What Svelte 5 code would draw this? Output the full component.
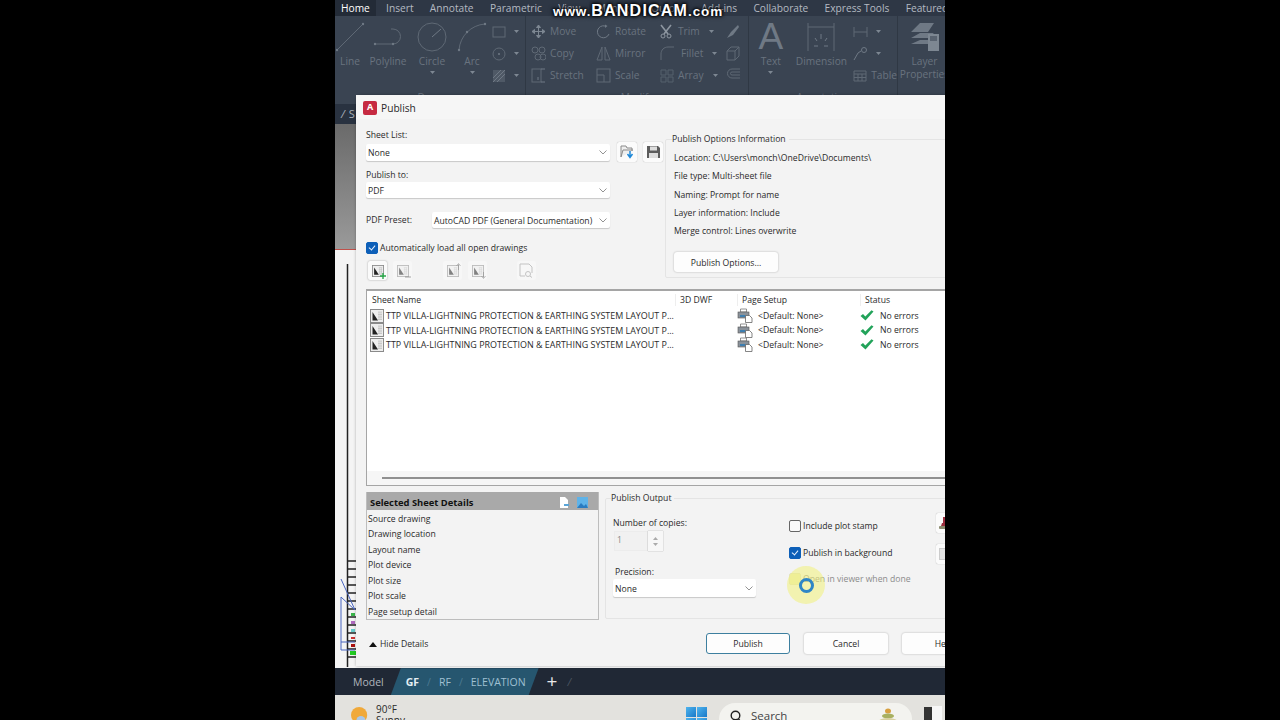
<script>
  const tabs = ['Home', 'Insert', 'Annotate', 'Parametric', 'View', 'Manage', 'Output', 'Add-ins', 'Collaborate', 'Express Tools', 'Featured Apps'];
  const info = [
    ['Location:', 'C:\\Users\\monch\\OneDrive\\Documents\\'],
    ['File type:', 'Multi-sheet file'],
    ['Naming:', 'Prompt for name'],
    ['Layer information:', 'Include'],
    ['Merge control:', 'Lines overwrite']
  ];
  const details = ['Source drawing', 'Drawing location', 'Layout name', 'Plot device', 'Plot size', 'Plot scale', 'Page setup detail'];
  const sheets = [1, 2, 3];
</script>

{#snippet caret()}
  <svg class="caret" width="5" height="3" viewBox="0 0 5 3"><path d="M0 0h5L2.500 3z" fill="#7d8792"/></svg>
{/snippet}

{#snippet chevron()}
  <svg class="chev" width="8" height="5" viewBox="0 0 8 5"><path d="M.5.5 4 4 7.500.5" fill="none" stroke="#777" stroke-width=".8"/></svg>
{/snippet}

{#snippet sheetIcon(size)}
  <svg width={size} height={size} viewBox="0 0 14 14">
    <rect x=".5" y=".5" width="13" height="13" fill="#eee" stroke="#8a8a8a"/>
    <path d="M8 3h4M8 5.500h4M8 8h4M8 10.500h4M9 3v8M11 3v8" stroke="#bbb" stroke-width=".6" fill="none"/>
    <path d="M2.500 3v8.500H8z" fill="#222"/>
  </svg>
{/snippet}

{#snippet setupIcon()}
  <svg width="16" height="15" viewBox="0 0 16 15">
    <path d="M3.500 1h6v3h-6z" fill="#fff" stroke="#777" stroke-width=".8"/>
    <rect x="1" y="4" width="11" height="6" fill="#8a929a" stroke="#555" stroke-width=".6"/>
    <rect x="3" y="7" width="6" height="2" fill="#3f7fb0"/>
    <path d="M8.500 7.500h4l2.500 2.500v4.500H8.500z" fill="#fff" stroke="#666" stroke-width=".8"/>
  </svg>
{/snippet}

{#snippet tick()}
  <svg width="14" height="11" viewBox="0 0 14 11"><path d="M.5 6 3 4l2.300 2.400L11.500.3 13.500 1.500 5.500 10.500z" fill="#22a35a"/></svg>
{/snippet}

<div class="page">
  <div class="frame">
    <nav class="tabs">
      {#each tabs as tab, i}
        <span class="tab" class:active={i === 0}>{tab}</span>
      {/each}
    </nav>

    <div class="ribbon">
      <section class="panel draw">
        <div class="tool w-line">
          <svg width="30" height="30" viewBox="0 0 30 30"><path d="M2 28 28 2" stroke="#5f6975" fill="none"/><circle cx="2" cy="28" r="1.200" fill="#6f7985"/><circle cx="28" cy="2" r="1.200" fill="#6f7985"/></svg>
          <span>Line</span>
        </div>
        <div class="tool w-poly">
          <svg width="30" height="30" viewBox="0 0 30 30"><path d="M2 22H20A7.500 7.500 0 0 0 20 7H18" stroke="#5f6975" fill="none"/><circle cx="2" cy="22" r="1.200" fill="#6f7985"/><circle cx="20" cy="22" r="1.200" fill="#6f7985"/></svg>
          <span>Polyline</span>
        </div>
        <div class="tool w-circle">
          <svg width="30" height="30" viewBox="0 0 30 30"><circle cx="15" cy="15" r="14" stroke="#5f6975" fill="none"/><path d="M15 15 24 7" stroke="#6f7985"/></svg>
          <span>Circle</span>
          {@render caret()}
        </div>
        <div class="tool w-arc">
          <svg width="30" height="30" viewBox="0 0 30 30"><path d="M2 28C3 14 14 3 28 2" stroke="#5f6975" fill="none"/><circle cx="2" cy="28" r="1.200" fill="#6f7985"/><circle cx="10" cy="10" r="1.200" fill="#6f7985"/><circle cx="28" cy="2" r="1.200" fill="#6f7985"/></svg>
          <span>Arc</span>
          {@render caret()}
        </div>
        <div class="stack draw-stack">
          <div class="small">
            <svg width="14" height="12" viewBox="0 0 14 12"><rect x="1" y="1" width="12" height="10" stroke="#5f6975" fill="none"/></svg>
            {@render caret()}
          </div>
          <div class="small">
            <svg width="14" height="14" viewBox="0 0 14 14"><circle cx="7" cy="7" r="6" stroke="#5f6975" fill="none"/><circle cx="7" cy="7" r="1" fill="#6f7985"/></svg>
            {@render caret()}
          </div>
          <div class="small">
            <svg width="14" height="14" viewBox="0 0 14 14"><rect x="1" y="1" width="12" height="12" fill="#4f5966"/><path d="M1 9 9 1M1 13 13 1M5 13l8-8" stroke="#6f7985"/></svg>
            {@render caret()}
          </div>
        </div>
        <span class="panel-name">Draw</span>
      </section>

      <section class="panel modify">
        <div class="mod-grid">
          <div class="small"><svg width="15" height="15" viewBox="0 0 15 15"><path d="M7.500 1v13M1 7.500h13M7.500 1 5.500 3.500h4zM7.500 14l-2-2.500h4zM1 7.500 3.500 5.500v4zM14 7.500l-2.500-2v4z" stroke="#7d8792" fill="#7d8792"/></svg><span>Move</span></div>
          <div class="small"><svg width="15" height="15" viewBox="0 0 15 15"><path d="M9 2A6 6 0 1 0 13 10" stroke="#6f7985" fill="none"/><path d="M9 .5V4l2.500-2z" fill="#6f7985"/></svg><span>Rotate</span></div>
          <div class="small trim"><svg width="12" height="15" viewBox="0 0 12 15"><path d="M1 1 8 10M11 1 4 10" stroke="#8d96a0" stroke-width="1.600"/><circle cx="3" cy="12" r="2" stroke="#8d96a0" fill="none"/><circle cx="9" cy="12" r="2" stroke="#8d96a0" fill="none"/></svg><span>Trim</span>{@render caret()}</div>
          <div class="small"><svg width="15" height="15" viewBox="0 0 15 15"><circle cx="4" cy="4" r="3" stroke="#5f6975" fill="none"/><circle cx="11" cy="4" r="3" stroke="#5f6975" fill="none"/><circle cx="7" cy="11" r="3" stroke="#5f6975" fill="none"/><circle cx="12" cy="11" r="3" stroke="#5f6975" fill="none"/></svg><span>Copy</span></div>
          <div class="small"><svg width="15" height="15" viewBox="0 0 15 15"><path d="M6 1 1 14h5zM9 1l5 13H9z" stroke="#5f6975" fill="none"/></svg><span>Mirror</span></div>
          <div class="small fillet"><svg width="15" height="15" viewBox="0 0 15 15"><path d="M1 14V8C1 4 4 1 8 1h6" stroke="#5f6975" fill="none"/></svg><span>Fillet</span>{@render caret()}</div>
          <div class="small"><svg width="15" height="15" viewBox="0 0 15 15"><rect x="1" y="1" width="9" height="13" stroke="#5f6975" fill="none"/><path d="M10 1h4M10 14h4M7 9v3" stroke="#6f7985"/></svg><span>Stretch</span></div>
          <div class="small"><svg width="15" height="15" viewBox="0 0 15 15"><rect x="1" y="1" width="13" height="13" stroke="#5f6975" fill="none"/><path d="M1 7h7v7" stroke="#5f6975" fill="none"/></svg><span>Scale</span></div>
          <div class="small"><svg width="14" height="14" viewBox="0 0 14 14"><path d="M1 1h5v5H1zM8 1h5v5H8zM1 8h5v5H1zM8 8h5v5H8z" stroke="#55606c" fill="none"/></svg><span>Array</span>{@render caret()}</div>
        </div>
        <div class="stack mod-extra">
          <svg width="14" height="15" viewBox="0 0 14 15"><path d="M1 14 5 8l7-7 1 2-6 8z" fill="#6f7985"/></svg>
          <svg width="14" height="15" viewBox="0 0 14 15"><path d="M1 5 5 1h8v9l-4 4H1zM1 5h8v9M9 5l4-4" stroke="#5f6975" fill="none"/></svg>
          <svg width="15" height="12" viewBox="0 0 15 12"><path d="M14 1H6a4.500 4.500 0 0 0 0 9h8M14 4H6a1.500 1.500 0 0 0 0 3h8" stroke="#5f6975" fill="none"/></svg>
        </div>
        <span class="panel-name">Modify</span>
      </section>

      <section class="panel annotate">
        <div class="tool w-text">
          <b class="big-a">A</b>
          <span>Text</span>
          {@render caret()}
        </div>
        <div class="tool w-dim">
          <svg width="28" height="30" viewBox="0 0 28 30"><path d="M1 1v28M27 1v28M1 5h26" stroke="#5f6975" fill="none"/><path d="M14 12v5M8 16l2 3M20 16l-2 3M7 24h4M17 24h4" stroke="#6f7985" fill="none"/></svg>
          <span>Dimension</span>
        </div>
        <div class="stack anno-stack">
          <div class="small"><svg width="15" height="12" viewBox="0 0 15 12"><path d="M1 1v10M14 1v10M1 6h13" stroke="#5f6975" fill="none"/></svg>{@render caret()}</div>
          <div class="small"><svg width="15" height="14" viewBox="0 0 15 14"><path d="M1 13 5 6l3-2" stroke="#6f7985" fill="none"/><circle cx="11" cy="3" r="2.500" stroke="#6f7985" fill="none"/></svg>{@render caret()}</div>
          <div class="small"><svg width="14" height="12" viewBox="0 0 14 12"><path d="M1 1h12v10H1zM1 4h12M1 7.500h12M5 4v7M9 4v7" stroke="#5f6975" fill="none"/></svg><span>Table</span></div>
        </div>
        <span class="panel-name">Annotation</span>
      </section>

      <section class="panel layers">
        <div class="tool w-layer">
          <svg width="30" height="30" viewBox="0 0 30 30"><path d="M1 10 10 1h14l-6 9zM1 16l9-5h14l-6 5zM1 22l9-4h8v4z" fill="#6f7985"/><rect x="18" y="12" width="11" height="17" fill="#7d8792"/><rect x="20" y="14" width="7" height="5" fill="#596370"/></svg>
          <span>Layer</span>
          <span>Properties</span>
        </div>
      </section>
    </div>

    <div class="filetabs"><i>/</i><span>S</span></div>

    <div class="canvas">
      <div class="canvas-top"></div>
      <div class="canvas-sheet">
        <svg class="drawing" width="21" height="418" viewBox="0 0 21 418">
          <path d="M12.500 14V417" stroke="#222" stroke-width="1.500" fill="none"/>
          <path d="M13 311h8M13 319h8M13 327h8M13 335h8M13 343h8M13 351h8M13 359h8M13 367h8M13 375h8M13 383h8M13 391h8M13 399h8M13 407h8" stroke="#222" stroke-width="1.300"/>
          <path d="M6 329 20 360 6 347V400H20" stroke="#4a66c0" fill="none"/>
          <path d="M6 392H20" stroke="#4a66c0"/>
          <path d="M16 363h4v3h-4z" fill="#3ab54a"/>
          <path d="M16 371h4v3h-4z" fill="#b06ac0"/>
          <path d="M16 379h4v3h-4z" fill="#6cc"/>
          <path d="M16 387h4v2h-4z" fill="#c33"/>
          <path d="M16 394h4v3h-4z" fill="#a11"/>
          <path d="M15 401h6v4h-6z" fill="#2c2"/>
        </svg>
      </div>

      <div class="dialog">
        <header class="dialog-title">
          <span class="app-icon">A</span>
          <span>Publish</span>
        </header>

        <div class="top">
          <div class="top-left">
            <div class="lbl first">Sheet List:</div>
            <div class="combo-row">
              <div class="combo wide"><span>None</span>{@render chevron()}</div>
              <button class="icon-btn" aria-label="Load sheet list">
                <svg width="15" height="14" viewBox="0 0 15 14"><path d="M1 12V1h5l1 2h5v3" stroke="#8a8a8a" fill="#eee"/><path d="M1 12 3 5h10" stroke="#8a8a8a" fill="none"/><path d="M10 6v5M7.500 9l2.500 3.500L12.500 9" stroke="#1e88d8" stroke-width="1.500" fill="none"/></svg>
              </button>
              <button class="icon-btn" aria-label="Save sheet list">
                <svg width="15" height="14" viewBox="0 0 15 14"><path d="M1 1h11l2 2v10H1z" fill="#5c5c5c"/><rect x="4" y="1.500" width="7" height="4" fill="#ddd"/><rect x="3" y="8" width="9" height="5" fill="#ddd"/></svg>
              </button>
            </div>
            <div class="lbl pub">Publish to:</div>
            <div class="combo wide pdf"><span>PDF</span>{@render chevron()}</div>
            <div class="preset">
              <span class="preset-lbl">PDF Preset:</span>
              <div class="combo"><span>AutoCAD PDF (General Documentation)</span>{@render chevron()}</div>
            </div>
            <label class="check auto"><span class="box on"></span>Automatically load all open drawings</label>
            <div class="tools">
              <button class="tool-btn raised" aria-label="Add sheets">
                {@render sheetIcon(12)}
                <svg class="sign" width="6" height="6" viewBox="0 0 6 6"><path d="M3 0v6M0 3h6" stroke="#2aa84a" stroke-width="1.400"/></svg>
              </button>
              <button class="tool-btn dim" aria-label="Remove sheets">
                {@render sheetIcon(12)}
                <svg class="sign" width="6" height="6" viewBox="0 0 6 6"><path d="M0 4h6" stroke="#777" stroke-width="1.200"/></svg>
              </button>
              <button class="tool-btn dim gap-a" aria-label="Move up">
                {@render sheetIcon(12)}
                <svg class="sign up" width="5" height="7" viewBox="0 0 5 7"><path d="M2.500 7V1M.5 3l2-2.500 2 2.500" stroke="#888" fill="none"/></svg>
              </button>
              <button class="tool-btn dim" aria-label="Move down">
                {@render sheetIcon(12)}
                <svg class="sign" width="5" height="7" viewBox="0 0 5 7"><path d="M2.500 0v6M.5 4l2 2.500 2-2.500" stroke="#888" fill="none"/></svg>
              </button>
              <button class="tool-btn dim gap-b" aria-label="Preview">
                <svg width="15" height="15" viewBox="0 0 15 15"><path d="M1 1h9l3 3v6M1 1v12h5" stroke="#999" fill="none"/><circle cx="9" cy="11" r="2.500" stroke="#999" fill="none"/><path d="M11 13l2 1.500" stroke="#999"/></svg>
              </button>
            </div>
          </div>

          <fieldset class="group options">
            <legend>Publish Options Information</legend>
            {#each info as [key, value]}
              <div class="info-line">{key} {value}</div>
            {/each}
            <button class="btn opts">Publish Options...</button>
          </fieldset>
        </div>

        <div class="list">
          <div class="list-grid list-head">
            <span class="c1">Sheet Name</span>
            <span class="c2">3D DWF</span>
            <span class="c3">Page Setup</span>
            <span class="c4">Status</span>
          </div>
          {#each sheets as s (s)}
            <div class="list-grid list-row">
              <span class="c1 name">{@render sheetIcon(14)}<span>TTP VILLA-LIGHTNING PROTECTION &amp; EARTHING SYSTEM LAYOUT P...</span></span>
              <span class="c2"></span>
              <span class="c3 setup">{@render setupIcon()}<span>&lt;Default: None&gt;</span></span>
              <span class="c4 status">{@render tick()}<span>No errors</span></span>
            </div>
          {/each}
          <div class="list-fill"></div>
          <div class="hscroll"><div class="thumb"></div></div>
        </div>

        <div class="bottom">
          <div class="details">
            <div class="details-head">
              <b>Selected Sheet Details</b>
              <svg width="10" height="11" viewBox="0 0 10 11"><path d="M1 0h5l3 3v8H1z" fill="#fff"/><path d="M5 7h5v2H5z" fill="#5aa5d8"/></svg>
              <svg width="11" height="11" viewBox="0 0 11 11"><rect width="11" height="11" fill="#5fb3e8"/><path d="M0 11 4 6l3 3 2-2 2 4z" fill="#2b7cc0"/></svg>
            </div>
            {#each details as d}
              <div class="detail">{d}</div>
            {/each}
          </div>

          <fieldset class="group output">
            <legend>Publish Output</legend>
            <div class="out-cols">
              <div class="out-left">
                <div class="lbl">Number of copies:</div>
                <div class="spinner">
                  <span class="spin-val">1</span>
                  <span class="spin-btns">
                    <svg width="5" height="3" viewBox="0 0 5 3"><path d="M0 3h5L2.500 0z" fill="#aaa"/></svg>
                    <svg width="5" height="3" viewBox="0 0 5 3"><path d="M0 0h5L2.500 3z" fill="#aaa"/></svg>
                  </span>
                </div>
                <div class="lbl prec">Precision:</div>
                <div class="combo"><span>None</span>{@render chevron()}</div>
              </div>
              <div class="out-mid">
                <label class="check"><span class="box"></span>Include plot stamp</label>
                <label class="check"><span class="box on"></span>Publish in background</label>
                <label class="check off"><span class="box"></span>Open in viewer when done</label>
              </div>
              <div class="out-right">
                <button class="icon-btn stamp" aria-label="Plot stamp settings">
                  <svg width="15" height="15" viewBox="0 0 15 15"><path d="M6 1h4v6H9l1 3H4l1-3h1z" fill="#9c2f3f"/><rect x="2" y="10" width="11" height="3" rx="1" fill="#8c8c70"/></svg>
                </button>
                <button class="icon-btn stamp" aria-label="Background settings"><span class="grey-box"></span></button>
              </div>
            </div>
          </fieldset>
        </div>

        <div class="footer">
          <button class="hide"><span class="tri"></span>Hide Details</button>
          <div class="actions">
            <button class="btn main">Publish</button>
            <button class="btn">Cancel</button>
            <button class="btn">Help</button>
          </div>
        </div>

        <div class="cursor"><span class="ring"></span></div>
      </div>
    </div>

    <div class="layout-bar">
      <span class="lay model">Model</span>
      <div class="lay-active">
        <b>GF</b><i>/</i><span>RF</span><i>/</i><span>ELEVATION</span>
      </div>
      <span class="plus">+</span>
      <i class="tail">/</i>
    </div>

    <div class="taskbar">
      <div class="weather">
        <svg width="18" height="18" viewBox="0 0 20 20"><circle cx="9" cy="10" r="9" fill="#f0a93a"/><circle cx="11" cy="16" r="5" fill="#a9c8ea"/></svg>
        <div class="weather-text"><span>90°F</span><span>Sunny</span></div>
      </div>
      <div class="winlogo"><i></i><i></i><i></i><i></i></div>
      <div class="search">
        <svg width="12" height="13" viewBox="0 0 12 13"><circle cx="5.500" cy="5.500" r="4.300" stroke="#222" stroke-width="1.400" fill="none"/><path d="M8.500 9 11.500 12.500" stroke="#222" stroke-width="1.400"/></svg>
        <span>Search</span>
        <svg class="pebbles" width="20" height="18" viewBox="0 0 20 18"><ellipse cx="10" cy="3" rx="3" ry="2.500" fill="#d8a040"/><ellipse cx="10" cy="8" rx="6" ry="2.500" fill="#a8b060"/><ellipse cx="10" cy="13" rx="9" ry="3" fill="#d8d0a0"/></svg>
      </div>
      <div class="task-app"><i></i><i></i></div>
    </div>

    <div class="watermark">www.<b>BANDICAM</b>.com</div>
  </div>
</div>

<style>
  :global(body) {
    margin: 0;
    background: #000;
  }

  .page {
    display: flex;
    justify-content: center;
    height: 720px;
    background: #000;
    font-family: "Open Sans", "Noto Sans", sans-serif;
    font-size: 8.650px;
    color: #2a2a2a;
  }

  .frame {
    position: relative;
    display: flex;
    flex-direction: column;
    width: 610px;
    height: 720px;
    overflow: hidden;
  }

  .tabs {
    position: relative;
    z-index: 0;
    display: flex;
    gap: 16.300px;
    height: 16px;
    padding-left: 6px;
    background: #2e3745;
    white-space: nowrap;
    font-size: 10.200px;
    line-height: 16px;
    color: #b4bac2;
  }

  .tab.active {
    position: relative;
    color: #fff;
  }

  .tab.active::before {
    content: "";
    position: absolute;
    inset: 0 -6px;
    background: #232b37;
    z-index: -1;
  }

  .ribbon {
    display: flex;
    height: 89px;
    background: #3a4452;
    color: #69737f;
    font-size: 10.200px;
    line-height: 13px;
    white-space: nowrap;
  }

  .panel {
    position: relative;
    display: flex;
    flex-shrink: 0;
    align-items: flex-start;
    border-right: 1px solid #2f3844;
    padding-top: 6px;
    box-sizing: border-box;
  }

  .panel.draw { width: 191px; }
  .panel.modify { width: 223px; padding-left: 5px; }
  .panel.annotate { width: 149px; }
  .panel.layers { flex: 1 0 47px; border: 0; }

  .panel-name {
    position: absolute;
    bottom: 0;
    left: 0;
    right: 0;
    text-align: center;
  }

  .tool {
    display: flex;
    flex-direction: column;
    align-items: center;
  }

  .tool svg:first-child,
  .big-a {
    margin-bottom: 3px;
  }

  .tool .caret { margin-top: 3px; }

  .w-line { width: 30px; margin-left: 0; }
  .w-poly { width: 36px; margin-left: 5px; }
  .w-circle { width: 36px; margin-left: 8px; }
  .w-arc { width: 30px; margin-left: 7px; }

  .stack {
    display: flex;
    flex-direction: column;
  }

  .draw-stack { margin-left: 5px; padding-top: 2px; gap: 7px; }

  .small {
    display: flex;
    align-items: center;
    gap: 4px;
    height: 15px;
  }

  .draw-stack .small { gap: 8px; }
  .anno-stack .small .caret { margin-left: 4px; }

  .mod-grid {
    display: grid;
    grid-template-columns: 65px 64px 66px;
    grid-auto-rows: 15px;
    row-gap: 7px;
    padding-top: 2px;
  }

  .trim span { margin-left: 2px; }
  .fillet span { margin-left: 2px; }
  .mod-grid .caret { margin-left: 5px; }

  .mod-extra { gap: 7px; padding-top: 2px; }

  .w-text { width: 30px; margin-left: 7px; }

  .big-a {
    font-family: "Liberation Sans", sans-serif;
    font-size: 37px;
    line-height: 30px;
    font-weight: 400;
    color: #6f7985;
  }

  .w-dim { width: 52px; margin-left: 10px; }

  .anno-stack { margin-left: 6px; padding-top: 2px; gap: 7px; }

  .w-layer { width: 47px; margin-left: 3px; }

  .filetabs {
    display: flex;
    gap: 4px;
    height: 20px;
    padding-left: 6px;
    background: #293240;
    color: #aab0b8;
    font-size: 11px;
    line-height: 20px;
  }

  .canvas {
    position: relative;
    flex: 1;
    display: flex;
    flex-direction: column;
  }

  .canvas-top {
    height: 125px;
    background: linear-gradient(#6a6a6a, #9a9a9a);
    border-bottom: 1px solid #c0504a;
  }

  .canvas-sheet {
    flex: 1;
    background: #f4f4f4;
  }

  .drawing { display: block; }

  .dialog {
    position: absolute;
    left: 21px;
    top: -29px;
    width: 640px;
    height: 571px;
    background: #f3f3f3;
    border-radius: 6px 0 0 0;
    box-shadow: 0 0 3px rgba(0, 0, 0, 0.3);
  }

  .dialog-title {
    display: flex;
    align-items: center;
    gap: 4px;
    height: 24px;
    padding: 1px 0 0 7px;
    box-sizing: border-box;
    font-size: 10.200px;
    background: #f6f6f6;
  }

  .app-icon {
    width: 14px;
    height: 14px;
    border-radius: 2px;
    background: #c62a42;
    color: #fff;
    font-size: 9px;
    font-weight: 700;
    line-height: 12px;
    text-align: center;
    box-sizing: border-box;
  }

  .top {
    display: flex;
    height: 170px;
    padding-left: 10px;
  }

  .top-left {
    width: 299px;
    flex-shrink: 0;
  }

  .lbl {
    line-height: 14px;
    height: 14px;
  }

  .lbl.first { margin-top: 9px; }
  .lbl.pub { margin-top: 6px; }
  .lbl.prec { margin-top: 14px; margin-left: 2px; }

  .combo-row {
    display: flex;
    align-items: center;
    height: 20px;
    gap: 6px;
  }

  .combo {
    display: flex;
    align-items: center;
    justify-content: space-between;
    height: 17px;
    padding: 1px 3px 0 2px;
    background: #fff;
    border-radius: 2px;
    box-shadow: 0 1px 1px rgba(0, 0, 0, 0.18);
    box-sizing: border-box;
  }

  .combo.wide {
    width: 244px;
    flex-shrink: 0;
  }

  .combo-row .combo { margin-right: 1px; }

  .combo.pdf { height: 16px; }

  .chev { flex-shrink: 0; }

  .icon-btn {
    display: flex;
    align-items: center;
    justify-content: center;
    width: 20px;
    height: 20px;
    padding: 0;
    border: 0;
    border-radius: 2px;
    background: #fbfbfb;
    box-shadow: 0 0 1px rgba(0, 0, 0, 0.35);
  }

  .preset {
    display: flex;
    align-items: center;
    margin-top: 14px;
    width: 244px;
  }

  .preset-lbl {
    width: 66px;
    white-space: nowrap;
  }

  .preset .combo {
    flex: 1;
    height: 16px;
    padding-left: 2px;
    white-space: nowrap;
  }

  .check {
    display: flex;
    align-items: center;
    gap: 2px;
    height: 14px;
    white-space: nowrap;
  }

  .check.auto { margin-top: 13px; }

  .box {
    position: relative;
    width: 10px;
    height: 10px;
    border: 1px solid #666;
    border-radius: 2px;
    background: #fafafa;
    flex-shrink: 0;
  }

  .box.on {
    background: #0d5fb8;
    border-color: #0d5fb8;
  }

  .box.on::after {
    content: "";
    position: absolute;
    left: 3px;
    top: 1px;
    width: 3px;
    height: 5px;
    border: solid #e8f2ff;
    border-width: 0 1px 1px 0;
    transform: rotate(40deg);
  }

  .tools {
    display: flex;
    margin-top: 6px;
    margin-left: 2px;
    gap: 6px;
  }

  .tool-btn {
    position: relative;
    display: flex;
    align-items: center;
    justify-content: center;
    width: 19px;
    height: 19px;
    padding: 0;
    border: 0;
    background: #f7f7f7;
    border-radius: 2px;
  }

  .tool-btn.raised { box-shadow: 0 0 2px rgba(0, 0, 0, 0.35); background: #fafafa; }
  .tool-btn.dim > svg { opacity: 0.55; }
  .gap-a { margin-left: 25px; }
  .gap-b { margin-left: 24px; }

  .sign {
    position: absolute;
    right: 1px;
    bottom: 1px;
  }

  .sign.up { bottom: auto; top: 2px; }

  .group {
    margin: 0;
    padding: 0;
    border: 1px solid #e4e4e4;
    border-radius: 2px;
    box-sizing: border-box;
  }

  .group legend {
    padding: 0 3px 0 0;
    margin-left: -2px;
    line-height: 14px;
  }

  .options {
    width: 330px;
    height: 146px;
    margin-top: 13px;
    padding-left: 8px;
  }

  .info-line {
    line-height: 18.200px;
    white-space: nowrap;
  }

  .options legend + .info-line { margin-top: 3px; }

  .btn {
    width: 84px;
    height: 21px;
    padding: 1px 0 0;
    border: 0;
    border-radius: 3px;
    background: #fdfdfd;
    box-shadow: 0 0 2px rgba(0, 0, 0, 0.3);
    font: inherit;
    color: inherit;
  }

  .btn.opts {
    display: block;
    width: 104px;
    height: 20px;
    margin-top: 12px;
  }

  .btn.main {
    border: 1px solid #3d7f9f;
    box-shadow: none;
  }

  .list {
    display: flex;
    flex-direction: column;
    height: 197px;
    margin-left: 10px;
    border: 1px solid #a5a5a5;
    border-top-width: 2px;
    border-right: 0;
    box-sizing: border-box;
    background: #fff;
  }

  .list-grid {
    display: grid;
    grid-template-columns: 308px 62px 123px 1fr;
    align-items: center;
  }

  .list-head { height: 17px; }
  .list-row { height: 14.600px; }

  .c1, .c2, .c3, .c4 { padding-left: 5px; box-sizing: border-box; white-space: nowrap; }
  .list-head span + span { border-left: 1px solid #eee; padding-left: 4px; }

  .name {
    display: flex;
    align-items: center;
    gap: 2px;
    padding-left: 3px;
    font-size: 8.950px;
  }

  .setup, .status {
    display: flex;
    align-items: center;
    gap: 5px;
    padding-left: 0;
  }

  .status { gap: 6px; }
  .name svg, .setup svg, .status svg { flex-shrink: 0; }

  .list-fill { flex: 1; }

  .hscroll {
    height: 14px;
    padding: 6px 0 0 15px;
    background: #f6f6f6;
    box-sizing: border-box;
  }

  .thumb {
    height: 2px;
    background: #909090;
  }

  .bottom {
    display: flex;
    gap: 6px;
    height: 129px;
    margin-top: 4px;
    padding-left: 10px;
  }

  .details {
    width: 233px;
    height: 128px;
    margin-top: 2px;
    flex-shrink: 0;
    border: 1px solid #bdbdbd;
    border-top: 0;
    box-sizing: border-box;
  }

  .details-head {
    display: flex;
    align-items: center;
    gap: 8px;
    height: 18px;
    margin-bottom: 1.500px;
    padding: 2px 10px 0 3px;
    box-sizing: border-box;
    background: #a9a9a9;
    color: #111;
  }

  .details-head b {
    flex: 1;
    font-size: 9.400px;
  }

  .detail {
    height: 15.500px;
    line-height: 15.500px;
    padding-left: 1px;
  }

  .output {
    width: 380px;
    height: 128px;
    margin-top: 1px;
    padding-left: 7px;
  }

  .out-cols { display: flex; }

  .out-left {
    width: 143px;
    margin-right: 33px;
    padding-top: 11px;
  }

  .spinner {
    display: flex;
    width: 49px;
    height: 20px;
    margin: 1px 0 0 1px;
    color: #888;
  }

  .spin-val {
    flex: 1;
    line-height: 18px;
    padding-left: 3px;
    background: #f1f1f1;
    box-shadow: inset 0 0 0 1px #ececec;
  }

  .spin-btns {
    display: flex;
    flex-direction: column;
    align-items: center;
    justify-content: center;
    gap: 3px;
    width: 15px;
    background: #f7f7f7;
    box-shadow: 0 0 1px rgba(0, 0, 0, 0.4);
  }

  .out-left .combo { height: 18px; }

  .out-mid {
    width: 147px;
    padding-top: 14px;
    display: flex;
    flex-direction: column;
    gap: 12.500px;
  }

  .check.off { color: #8b8b8b; }
  .check.off .box { border-color: #e2e2c0; background: #eeeeb8; }

  .out-right {
    display: flex;
    flex-direction: column;
    gap: 11px;
    padding-top: 8px;
  }

  .stamp { justify-content: flex-start; }

  .stamp svg { margin-left: 1px; }

  .grey-box {
    width: 10px;
    height: 10px;
    margin-left: 3px;
    background: #e4e4e4;
    border: 1px solid #ccc;
  }

  .footer {
    display: flex;
    align-items: center;
    justify-content: space-between;
    margin-top: 14px;
    padding: 0 10px 0 13px;
  }

  .hide {
    display: flex;
    align-items: center;
    gap: 3px;
    padding: 1px 0 0;
    border: 0;
    background: none;
    font: inherit;
    color: inherit;
  }

  .tri {
    width: 0;
    height: 0;
    border: 4px solid transparent;
    border-top: 0;
    border-bottom: 5px solid #111;
  }

  .actions {
    display: flex;
    gap: 14px;
  }

  .cursor {
    position: absolute;
    left: 431px;
    top: 471px;
    display: flex;
    align-items: center;
    justify-content: center;
    width: 38px;
    height: 38px;
    border-radius: 50%;
    background: rgba(240, 240, 120, 0.55);
  }

  .ring {
    width: 9px;
    height: 9px;
    border: 3px solid #2f86c6;
    border-radius: 50%;
  }

  .layout-bar {
    display: flex;
    align-items: center;
    height: 27px;
    background: #202835;
    color: #b0b6bd;
    font-size: 10.500px;
    white-space: nowrap;
  }

  .model { margin-left: 18px; }

  .lay-active {
    display: flex;
    align-items: center;
    gap: 8px;
    height: 100%;
    margin-left: 7px;
    padding: 0 13px 0 15px;
    background: #26566f;
    clip-path: polygon(10px 0, 100% 0, calc(100% - 10px) 100%, 0 100%);
    color: #9fc0d2;
  }

  .lay-active b { color: #e4eef3; }
  .lay-active i { color: #4c7a92; font-style: normal; }

  .plus {
    margin-left: 8px;
    font-size: 19px;
    line-height: 27px;
    color: #e8e8e8;
  }

  .tail {
    margin-left: 10px;
    color: #4b5561;
  }

  .taskbar {
    position: relative;
    display: flex;
    height: 25px;
    background: #e3e2de;
    overflow: hidden;
  }

  .weather {
    display: flex;
    gap: 7px;
    width: 351px;
    padding: 9px 0 0 16px;
    box-sizing: border-box;
  }

  .weather svg {
    margin-top: 2px;
    flex-shrink: 0;
  }

  .weather-text {
    display: flex;
    flex-direction: column;
    line-height: 11px;
    font-size: 10px;
  }

  .winlogo {
    display: grid;
    grid-template-columns: 10px 10px;
    grid-auto-rows: 10px;
    gap: 1px;
    margin-top: 12px;
  }

  .winlogo i { background: linear-gradient(135deg, #4fb4ee, #1878c8); }

  .search {
    display: flex;
    align-items: flex-start;
    gap: 9px;
    width: 193px;
    height: 32px;
    margin: 8px 0 0 12px;
    padding: 6px 0 0 11px;
    background: #f3f3ef;
    border-radius: 16px;
    box-sizing: border-box;
    font-size: 11.500px;
    line-height: 14px;
    color: #444;
  }

  .search svg:first-child { margin-top: 1px; }

  .pebbles { margin-left: 82px; margin-top: -1px; }

  .task-app {
    display: flex;
    margin: 12px 0 0 12px;
  }

  .task-app i { width: 8px; height: 14px; background: #333; }
  .task-app i + i { background: #f7f7f7; width: 10px; margin-top: -1px; }

  .watermark {
    position: absolute;
    left: 218px;
    top: 3px;
    color: #fff;
    font-family: "Liberation Sans", sans-serif;
    font-size: 13.500px;
    font-weight: 700;
    line-height: 16px;
    letter-spacing: 0.900px;
    white-space: nowrap;
    text-shadow: 0 0 3px #000, 0 0 3px #000, 0 0 5px #000;
  }

  .watermark b {
    font-size: 16px;
    letter-spacing: 1.200px;
  }
</style>
